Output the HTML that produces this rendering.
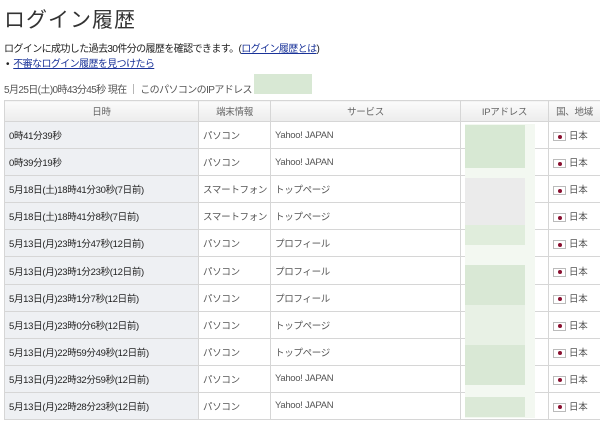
<!DOCTYPE html>
<html><head><meta charset="utf-8"><style>
*{margin:0;padding:0;box-sizing:border-box}
body{width:600px;height:424px;overflow:hidden;background:#fff;font-family:"Liberation Sans","Noto Sans CJK JP",sans-serif;color:#222;position:relative}
h1{position:absolute;left:4px;top:4px;font-size:21px;font-weight:normal;color:#333;letter-spacing:1px}
.p{position:absolute;left:4px;font-size:10px;letter-spacing:-0.6px;white-space:nowrap}
a{color:#1a3399;text-decoration:underline}
table{position:absolute;left:4px;top:100px;width:596px;border-collapse:collapse;font-size:9.5px;letter-spacing:-0.3px;table-layout:fixed}
td,th{border:1px solid #d6d6d6;height:27.1px;padding:0 4px;white-space:nowrap;overflow:hidden;color:#555;font-weight:normal}
th{height:21px;background:linear-gradient(#fbfbfb,#ececec);text-align:center;color:#666}
td.d{background:#eef0f3;color:#222}
.f{display:inline-block;width:13px;height:9px;border:1px solid #bbb;background:#fff;vertical-align:middle;position:relative;margin-right:3px}
.f:after{content:"";position:absolute;left:3.5px;top:1.5px;width:4px;height:4px;border-radius:50%;background:#8a1030}
.b{position:absolute;left:465px;width:70px}
</style></head><body>
<h1>ログイン履歴</h1>
<div class="p" style="top:40px">ログインに成功した過去30件分の履歴を確認できます。(<a>ログイン履歴とは</a>)</div>
<div class="p" style="top:55px;left:6px">•&nbsp; <a>不審なログイン履歴を見つけたら</a></div>
<div class="p" style="top:81px;color:#555">5月25日(土)0時43分45秒 現在 ｜ このパソコンのIPアドレス：</div>
<div style="position:absolute;left:254px;top:74px;width:58px;height:20px;background:#d8e8d4"></div>
<table>
<colgroup><col style="width:194px"><col style="width:72px"><col style="width:190px"><col style="width:88px"><col style="width:52px"></colgroup>
<tr><th>日時</th><th>端末情報</th><th>サービス</th><th>IPアドレス</th><th>国、地域</th></tr>
<tr><td class="d">0時41分39秒</td><td>パソコン</td><td>Yahoo! JAPAN</td><td></td><td><span class="f"></span>日本</td></tr>
<tr><td class="d">0時39分19秒</td><td>パソコン</td><td>Yahoo! JAPAN</td><td></td><td><span class="f"></span>日本</td></tr>
<tr><td class="d">5月18日(土)18時41分30秒(7日前)</td><td>スマートフォン</td><td>トップページ</td><td></td><td><span class="f"></span>日本</td></tr>
<tr><td class="d">5月18日(土)18時41分8秒(7日前)</td><td>スマートフォン</td><td>トップページ</td><td></td><td><span class="f"></span>日本</td></tr>
<tr><td class="d">5月13日(月)23時1分47秒(12日前)</td><td>パソコン</td><td>プロフィール</td><td></td><td><span class="f"></span>日本</td></tr>
<tr><td class="d">5月13日(月)23時1分23秒(12日前)</td><td>パソコン</td><td>プロフィール</td><td></td><td><span class="f"></span>日本</td></tr>
<tr><td class="d">5月13日(月)23時1分7秒(12日前)</td><td>パソコン</td><td>プロフィール</td><td></td><td><span class="f"></span>日本</td></tr>
<tr><td class="d">5月13日(月)23時0分6秒(12日前)</td><td>パソコン</td><td>トップページ</td><td></td><td><span class="f"></span>日本</td></tr>
<tr><td class="d">5月13日(月)22時59分49秒(12日前)</td><td>パソコン</td><td>トップページ</td><td></td><td><span class="f"></span>日本</td></tr>
<tr><td class="d">5月13日(月)22時32分59秒(12日前)</td><td>パソコン</td><td>Yahoo! JAPAN</td><td></td><td><span class="f"></span>日本</td></tr>
<tr><td class="d">5月13日(月)22時28分23秒(12日前)</td><td>パソコン</td><td>Yahoo! JAPAN</td><td></td><td><span class="f"></span>日本</td></tr>
</table>
<div class="b" style="top:124px;height:294px;background:#f3f8f1"></div>
<div class="b" style="top:125px;height:43px;width:60px;background:#d7e8d3"></div>
<div class="b" style="top:178px;height:47px;width:60px;background:#ebebeb"></div>
<div class="b" style="top:225px;height:20px;width:60px;background:#e0eddc"></div>
<div class="b" style="top:265px;height:40px;width:60px;background:#d9e8d5"></div>
<div class="b" style="top:305px;height:40px;width:60px;background:#e8f1e5"></div>
<div class="b" style="top:345px;height:40px;width:60px;background:#d9e8d5"></div>
<div class="b" style="top:397px;height:20px;width:60px;background:#dbe9d7"></div>
</body></html>
